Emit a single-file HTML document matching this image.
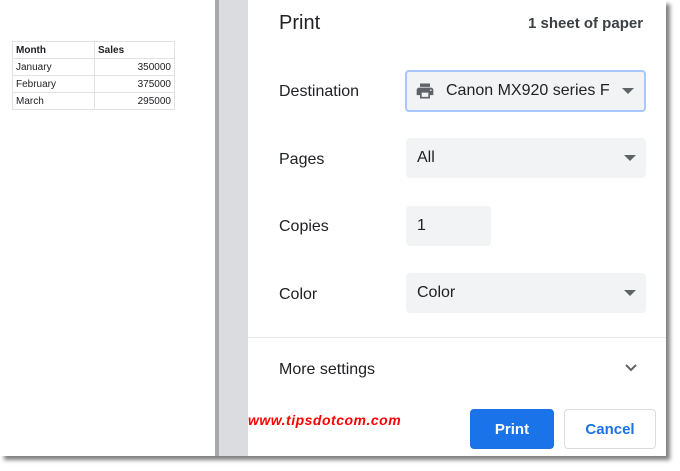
<!DOCTYPE html>
<html><head><style>
body{margin:0;width:680px;height:471px;background:#fff;position:relative;overflow:hidden;font-family:"Liberation Sans",Arial,sans-serif;color:#202124}
.a{position:absolute}
.frame{left:0;top:0;width:666px;height:456px;background:#fff;box-shadow:4px 4px 4px rgba(0,0,0,0.5)}
.strip{left:215px;top:0;width:33px;height:456px;background:#dadce0;border-left:4px solid #a9a9ab;box-sizing:border-box}
table{border-collapse:collapse;font-size:10px}
td{border:1px solid #e2e2e2;padding:1px 3px;height:14px}
.lbl{left:279px;font-size:16px}
.box{background:#f1f3f4;border-radius:4px;font-size:16px;box-sizing:border-box}
.tri{width:0;height:0;border-left:6px solid transparent;border-right:6px solid transparent;border-top:6px solid #5f6368;position:absolute;right:10px;top:17px}
</style></head><body>
<div class="a frame"></div>
<div class="a" style="left:12px;top:41px"><table>
<tr><td style="width:75px;font-weight:bold">Month</td><td style="width:73px;font-weight:bold">Sales</td></tr>
<tr><td>January</td><td style="text-align:right">350000</td></tr>
<tr><td>February</td><td style="text-align:right">375000</td></tr>
<tr><td>March</td><td style="text-align:right">295000</td></tr></table></div>
<div class="a strip"></div>
<div class="a" style="left:279px;top:12px;font-size:20px">Print</div>
<div class="a" style="left:528px;top:15px;font-size:15px;font-weight:bold;color:#3c4043">1 sheet of paper</div>
<div class="a lbl" style="top:83px">Destination</div>
<div class="a box" style="left:405px;top:70px;width:241px;height:42px;border:2px solid #a8c7fa;padding:10px 0 0 39px">Canon MX920 series F
<svg class="a" style="left:8px;top:9px" width="20" height="20" viewBox="0 0 24 24"><path fill="#5f6368" d="M19 8H5c-1.66 0-3 1.34-3 3v6h4v4h12v-4h4v-6c0-1.66-1.34-3-3-3zm-3 11H8v-5h8v5zm3-7c-.55 0-1-.45-1-1s.45-1 1-1 1 .45 1 1-.45 1-1 1zm-1-9H6v4h12V3z"/></svg>
<div class="tri" style="top:16px"></div></div>
<div class="a lbl" style="top:151px">Pages</div>
<div class="a box" style="left:406px;top:138px;width:240px;height:40px;padding:11px 0 0 11px">All<div class="tri"></div></div>
<div class="a lbl" style="top:218px">Copies</div>
<div class="a box" style="left:406px;top:206px;width:85px;height:40px;padding:11px 0 0 11px">1</div>
<div class="a lbl" style="top:286px">Color</div>
<div class="a box" style="left:406px;top:273px;width:240px;height:40px;padding:11px 0 0 11px">Color<div class="tri"></div></div>
<div class="a" style="left:248px;top:337px;width:418px;height:1px;background:#e8eaed"></div>
<div class="a lbl" style="top:361px">More settings</div>
<svg class="a" style="left:624px;top:363px" width="14" height="10" viewBox="0 0 14 10"><path d="M2 2l5 5 5-5" stroke="#5f6368" stroke-width="2" fill="none"/></svg>
<div class="a" style="left:248px;top:412px;color:#f00;font-weight:bold;font-style:italic;font-size:14px;letter-spacing:0.5px">www.tipsdotcom.com</div>
<div class="a" style="left:470px;top:409px;width:84px;height:40px;background:#1a73e8;border-radius:4px;color:#fff;font-size:15px;font-weight:bold;text-align:center;line-height:42px">Print</div>
<div class="a" style="left:564px;top:409px;width:92px;height:40px;border:1px solid #dadce0;box-sizing:border-box;border-radius:4px;color:#1a73e8;font-size:15px;font-weight:bold;text-align:center;line-height:40px">Cancel</div>
</body></html>
